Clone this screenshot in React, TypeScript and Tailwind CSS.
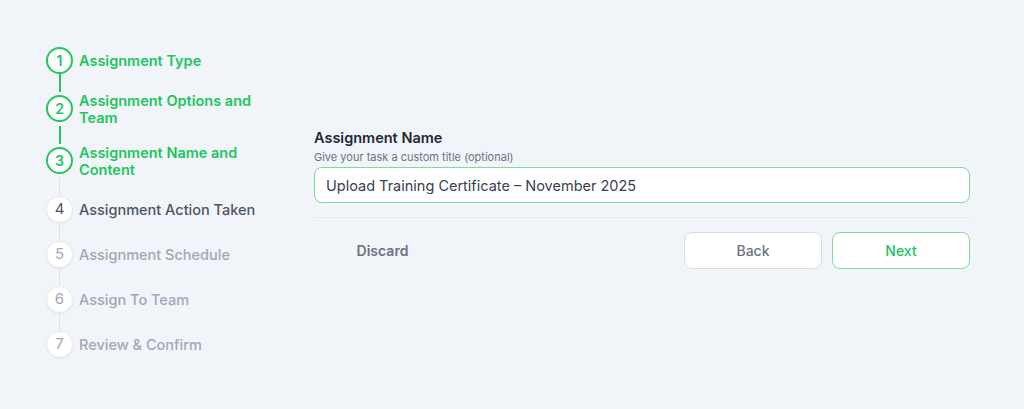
import { useState } from "react";

type StepState = "done" | "current" | "todo";

const steps: { n: number; label: string; state: StepState }[] = [
  { n: 1, label: "Assignment Type", state: "done" },
  { n: 2, label: "Assignment Options and Team", state: "done" },
  { n: 3, label: "Assignment Name and Content", state: "done" },
  { n: 4, label: "Assignment Action Taken", state: "current" },
  { n: 5, label: "Assignment Schedule", state: "todo" },
  { n: 6, label: "Assign To Team", state: "todo" },
  { n: 7, label: "Review & Confirm", state: "todo" },
];

function Stepper() {
  return (
    <div className="flex w-[212px] flex-col pb-[5px]">
      {steps.map((s, i) => {
        const green = s.state === "done";
        // 연결선은 다음 단계가 완료면 초록, 아니면 회색
        const nextGreen = steps[i + 1]?.state === "done";
        return (
          <div key={s.n} className="flex flex-col">
            <div className="flex items-center gap-[6px]">
              <div
                className={
                  green
                    ? "flex h-[27px] w-[27px] shrink-0 items-center justify-center rounded-full border-2 border-[#22c55e] bg-white text-[14px] font-semibold text-[#22c55e]"
                    : s.state === "current"
                      ? "flex h-[27px] w-[27px] shrink-0 items-center justify-center rounded-full border border-[#e5e9f0] bg-white text-[15px] text-[#4b5563] shadow-[0_1px_2px_rgba(0,0,0,0.05)]"
                      : "flex h-[27px] w-[27px] shrink-0 items-center justify-center rounded-full border border-[#e5e9f0] bg-white text-[15px] text-[#a0a8b6] shadow-[0_1px_2px_rgba(0,0,0,0.05)]"
                }
              >
                {s.n}
              </div>
              <span
                className={
                  green
                    ? "text-[14.5px] leading-[17px] font-semibold text-[#22c55e]"
                    : s.state === "current"
                      ? "text-[14.5px] leading-[17px] font-medium text-[#4b5563]"
                      : "text-[14.5px] leading-[17px] font-medium text-[#a0a8b6]"
                }
              >
                {s.label}
              </span>
            </div>
            {i < steps.length - 1 && (
              <div
                className={
                  nextGreen
                    ? "ml-[12.5px] h-[18px] w-[2px] bg-[#22c55e]"
                    : "ml-[13px] h-[18px] w-[1px] bg-[#dde2ea]"
                }
              />
            )}
          </div>
        );
      })}
    </div>
  );
}

export default function App() {
  const [name, setName] = useState("Upload Training Certificate – November 2025");

  return (
    <div
      className="flex h-screen items-center bg-[#f1f4f9] pl-[46px] pr-[54px]"
      style={{ fontFamily: "Inter, 'Noto Sans', sans-serif" }}
    >
      <Stepper />
      <div className="ml-[56px] flex flex-1 flex-col pb-[11px]">
        <label className="text-[14.5px] font-semibold leading-[18px] text-[#1f2937]">
          Assignment Name
        </label>
        <p className="mt-[3px] text-[11px] leading-[14px] text-[#6b7280]">
          Give your task a custom title (optional)
        </p>
        <input
          value={name}
          onChange={(e) => setName(e.target.value)}
          className="mt-[3px] h-[36px] w-full rounded-[8px] border-[1.5px] border-[#7ddc9c] bg-white px-[11px] text-[14.5px] text-[#374151] outline-none"
        />
        <div className="mt-[14px] h-px w-full bg-[#e3e7ee]" />
        <div className="mt-[14px] flex items-center">
          <button className="h-[36px] w-[137px] text-[14px] font-semibold text-[#6b7280]">
            Discard
          </button>
          <div className="ml-auto flex gap-[10px]">
            <button className="h-[37px] w-[138px] rounded-[8px] border border-[#d8dce3] bg-white text-[14px] font-medium text-[#6b7280]">
              Back
            </button>
            <button className="h-[37px] w-[138px] rounded-[8px] border-[1.5px] border-[#7ddc9c] bg-white text-[14px] font-medium text-[#22c55e]">
              Next
            </button>
          </div>
        </div>
      </div>
    </div>
  );
}
